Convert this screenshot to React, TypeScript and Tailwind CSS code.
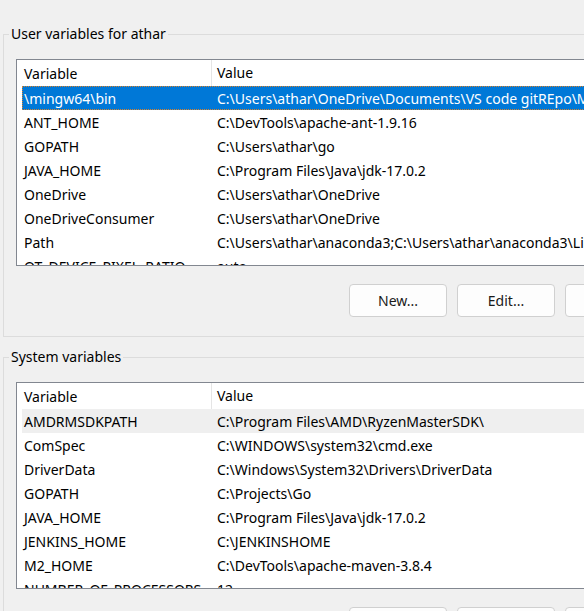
import React from "react";

type Row = [string, string];

const userVars: Row[] = [
  ["\\mingw64\\bin", "C:\\Users\\athar\\OneDrive\\Documents\\VS code gitREpo\\MinGW\\mingw64\\bin"],
  ["ANT_HOME", "C:\\DevTools\\apache-ant-1.9.16"],
  ["GOPATH", "C:\\Users\\athar\\go"],
  ["JAVA_HOME", "C:\\Program Files\\Java\\jdk-17.0.2"],
  ["OneDrive", "C:\\Users\\athar\\OneDrive"],
  ["OneDriveConsumer", "C:\\Users\\athar\\OneDrive"],
  ["Path", "C:\\Users\\athar\\anaconda3;C:\\Users\\athar\\anaconda3\\Library\\mingw-w64\\bin;"],
  ["QT_DEVICE_PIXEL_RATIO", "auto"],
];

const systemVars: Row[] = [
  ["AMDRMSDKPATH", "C:\\Program Files\\AMD\\RyzenMasterSDK\\"],
  ["ComSpec", "C:\\WINDOWS\\system32\\cmd.exe"],
  ["DriverData", "C:\\Windows\\System32\\Drivers\\DriverData"],
  ["GOPATH", "C:\\Projects\\Go"],
  ["JAVA_HOME", "C:\\Program Files\\Java\\jdk-17.0.2"],
  ["JENKINS_HOME", "C:\\JENKINSHOME"],
  ["M2_HOME", "C:\\DevTools\\apache-maven-3.8.4"],
  ["NUMBER_OF_PROCESSORS", "12"],
];

const VarList = ({ rows, selected }: { rows: Row[]; selected: "focus" | "dim" }) => (
  <div className="h-[207px] w-[600px] overflow-hidden border border-[#828790] bg-white">
    <div className="flex h-[26px] items-center">
      <div className="w-[194px] pl-[7px]">Variable</div>
      <div className="h-full border-l border-[#e5e5e5] pl-[5px] leading-[26px]">Value</div>
    </div>
    {rows.map(([name, value], i) => {
      const rowCls =
        i === 0
          ? selected === "focus"
            ? "bg-[#0078d7] text-white outline outline-1 -outline-offset-1 outline-dotted outline-[#d9822b]"
            : "bg-[#efefef]"
          : "";
      return (
        <div key={name + i} className={`ml-[5px] grid h-[24px] grid-cols-[189px_1fr] items-center whitespace-nowrap ${rowCls}`}>
          <div className="overflow-hidden pl-[2px]">{name}</div>
          <div className="overflow-hidden pl-[6px]">{value}</div>
        </div>
      );
    })}
  </div>
);

const Btn = ({ label }: { label: string }) => (
  <button className="h-[33px] w-[98px] shrink-0 rounded-[4px] border border-[#d0d0d0] bg-[#fdfdfd] text-[#1a1a1a]">
    {label}
  </button>
);

const Group = ({ title, rows, selected }: { title: string; rows: Row[]; selected: "focus" | "dim" }) => (
  <fieldset className="ml-[3px] w-[660px] border border-[#dcdcdc] pl-[12px] pt-[15px] pb-[19px]">
    <legend className="-ml-[7px] px-[2px] leading-[20px]">{title}</legend>
    <VarList rows={rows} selected={selected} />
    <div className="mt-[18px] flex gap-[10px] pl-[333px]">
      <Btn label="New..." />
      <Btn label="Edit..." />
      <Btn label="Delete" />
    </div>
  </fieldset>
);

export default function App() {
  return (
    <div className="h-[611px] w-[584px] overflow-hidden bg-[#f0f0f0] pt-[24px] text-[14px] text-black [font-family:'Noto_Sans','Open_Sans',sans-serif]">
      <Group title="User variables for athar" rows={userVars} selected="focus" />
      <div className="mt-[10px]">
        <Group title="System variables" rows={systemVars} selected="dim" />
      </div>
    </div>
  );
}
